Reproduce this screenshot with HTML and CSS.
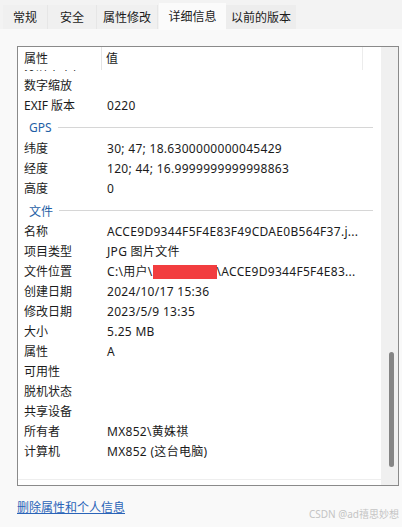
FILE: index.html
```html
<!DOCTYPE html>
<html lang="zh-CN">
<head>
<meta charset="utf-8">
<link rel="stylesheet" href="styles.css">
</head>
<body>
<div class="tabs">
  <div class="tab t1">常规</div>
  <div class="tab t2">安全</div>
  <div class="tab t3">属性修改</div>
  <div class="tab active">详细信息</div>
  <div class="tab t5">以前的版本</div>
</div>
<div class="panel">
  <div class="box">
    <div class="list">
      <div class="head">
        <div class="hc name">属性</div>
        <div class="hc val">值</div>
        <div class="hc rest"></div>
      </div>
      <div class="view">
        <div class="rows">
          <div class="row"><span class="n">分辨率单位</span><span class="v"></span></div>
          <div class="row"><span class="n">数字缩放</span><span class="v"></span></div>
          <div class="row"><span class="n">EXIF 版本</span><span class="v">0220</span></div>
          <div class="group"><span class="gt">GPS</span><span class="gl"></span></div>
          <div class="row"><span class="n">纬度</span><span class="v">30; 47; 18.6300000000045429</span></div>
          <div class="row"><span class="n">经度</span><span class="v">120; 44; 16.9999999999998863</span></div>
          <div class="row"><span class="n">高度</span><span class="v">0</span></div>
          <div class="group"><span class="gt">文件</span><span class="gl"></span></div>
          <div class="row"><span class="n">名称</span><span class="v">ACCE9D9344F5F4E83F49CDAE0B564F37.j...</span></div>
          <div class="row"><span class="n">项目类型</span><span class="v">JPG 图片文件</span></div>
          <div class="row"><span class="n">文件位置</span><span class="v">C:\用户\<span class="red"></span>\ACCE9D9344F5F4E83...</span></div>
          <div class="row"><span class="n">创建日期</span><span class="v">2024/10/17 15:36</span></div>
          <div class="row"><span class="n">修改日期</span><span class="v">2023/5/9 13:35</span></div>
          <div class="row"><span class="n">大小</span><span class="v">5.25 MB</span></div>
          <div class="row"><span class="n">属性</span><span class="v">A</span></div>
          <div class="row"><span class="n">可用性</span><span class="v"></span></div>
          <div class="row"><span class="n">脱机状态</span><span class="v"></span></div>
          <div class="row"><span class="n">共享设备</span><span class="v"></span></div>
          <div class="row"><span class="n">所有者</span><span class="v">MX852\黄姝祺</span></div>
          <div class="row"><span class="n">计算机</span><span class="v">MX852 (这台电脑)</span></div>
        </div>
      </div>
    </div>
    <div class="sb"><div class="thumb"></div></div>
  </div>
  <div class="foot">
    <a class="link" href="#">删除属性和个人信息</a>
    <span class="wm">CSDN @ad禧思妙想</span>
  </div>
</div>
</body>
</html>
```
FILE: styles.css
```css
html, body {
  margin: 0;
  padding: 0;
}
body {
  width: 402px;
  height: 527px;
  overflow: hidden;
  background: #f3f3f3;
  font-family: "Noto Sans", "Noto Sans CJK SC", sans-serif;
  font-size: 12px;
  color: #1b1b1b;
}
.tabs {
  display: flex;
  align-items: flex-end;
  height: 29px;
  padding-left: 3px;
  box-sizing: border-box;
}
.tab {
  height: 24px;
  line-height: 25px;
  box-sizing: border-box;
  text-align: center;
  color: #1b1b1b;
  background: #f0f0f0;
  border-right: 1px solid #e6e6e6;
}
.t1 { width: 45px; }
.t2 { width: 49px; }
.t3 { width: 61px; }
.tab.active {
  width: 67px;
  height: 27px;
  line-height: 27px;
  background: #fbfbfb;
  border: none;
  margin: 0 0 -1px 1px;
  position: relative;
  z-index: 1;
}
.t5 { width: 70px; border-right: none; background: #ededed; }
.panel {
  background: #f9f9f9;
  height: 498px;
  padding: 17px 3px 0 17px;
  box-sizing: border-box;
}
.box {
  display: flex;
  width: 382px;
  height: 440px;
  border: 1px solid #8a8a8a;
  box-sizing: border-box;
  background: #fff;
}
.list {
  width: 363px;
  display: flex;
  flex-direction: column;
  border-bottom: 1px solid #eeeeee;
  margin-bottom: 5px;
}
.head {
  display: flex;
  height: 23px;
  flex: none;
  background: #fff;
}
.hc {
  box-sizing: border-box;
  line-height: 24px;
}
.hc.name {
  width: 84px;
  padding-left: 6px;
  border-right: 1px solid #e4e4e4;
}
.hc.val {
  width: 261px;
  padding-left: 4px;
  border-right: 1px solid #ececec;
}
.view {
  flex: 1;
  overflow: hidden;
}
.rows {
  margin-top: -14px;
}
.row {
  display: flex;
  height: 20px;
  line-height: 20px;
  white-space: nowrap;
}
.row .n {
  width: 89px;
  padding-left: 6px;
  box-sizing: border-box;
  flex: none;
}
.row .v {
  display: flex;
  align-items: center;
  letter-spacing: 0.3px;
}
.red {
  display: inline-block;
  width: 64px;
  height: 14px;
  background: #f23d3f;
}
.group {
  display: flex;
  align-items: center;
  height: 23px;
  padding: 0 8px 0 11px;
}
.gt {
  color: #1f5fa6;
  margin-right: 6px;
}
.gl {
  flex: 1;
  height: 1px;
  background: #d6d6d6;
}
.sb {
  width: 17px;
  background: #f0f0f0;
  display: flex;
  justify-content: center;
  padding-top: 305px;
  box-sizing: border-box;
}
.thumb {
  width: 5px;
  height: 115px;
  border-radius: 3px;
  background: #858585;
  margin-left: 3px;
}
.foot {
  display: flex;
  justify-content: space-between;
  align-items: center;
  padding-top: 6px;
}
.link {
  color: #2a64b8;
  text-decoration: underline;
  font-size: 12px;
}
.wm {
  color: #c4c4c4;
  font-size: 10px;
  margin-top: 14px;
}
```
